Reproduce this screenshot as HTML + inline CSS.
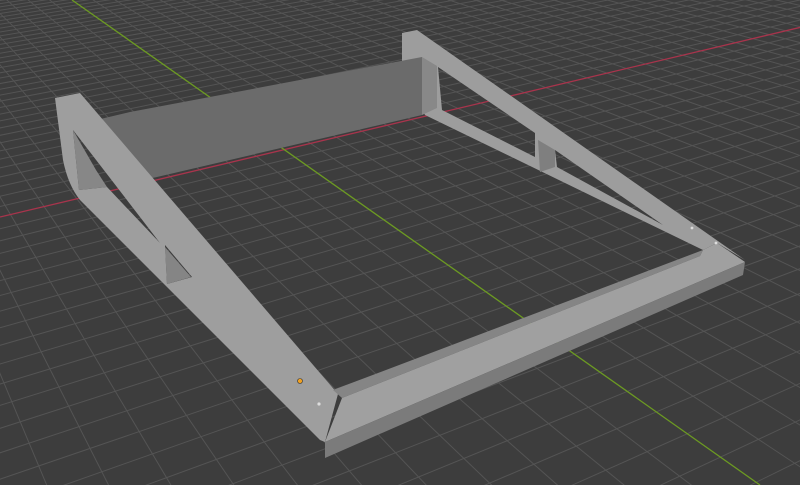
<!DOCTYPE html>
<html><head><meta charset="utf-8"><style>
html,body{margin:0;padding:0;background:#3d3d3d;width:800px;height:485px;overflow:hidden}
svg{display:block;overflow:hidden;position:absolute;left:0;top:0}
</style></head><body>
<svg id="s" width="800" height="485" viewBox="0 0 800 485" xmlns="http://www.w3.org/2000/svg">
<rect width="800" height="485" fill="#3d3d3d"/>
<g id="grid" stroke="#545454" stroke-width="1" fill="none"></g>
<g id="axes" fill="none" stroke-width="1.3"></g>
<g id="model">
<path fill="#9d9d9d" fill-rule="evenodd" d="M402,33 L417,30 L745,260 L717,243 L703,250 L425,115 L402,70 Z M438,67 L535,133 L535,157 L442,110 Z M555,150 L663,225 L557,167 Z"/>
<path fill="#7f7f7f" d="M538,140 L555,150 L555,167 L540,172 Z"/>
<path fill="#6b6b6b" d="M92,121 L130,112 L422,57 L422,115 L157,177 L120,185 Z"/>
<path fill="#888" d="M422,57 L437,66 L437,108 L422,115 Z"/>
<path fill="#9e9e9e" fill-rule="evenodd" d="M55,98 L80,93 L338,394 L325,442 L320,440 L115,235 L80,200 Q68,185 63,160 L55,98 Z M73,130 L160,243 L107,187 L79,190 Z M165,245 L192,277 L167,284 Z"/>
<path fill="#878787" d="M73,130 L79,190 L107,187 L96,170 Z"/>
<path fill="#858585" d="M165,247 L191,277 L167,284 Z"/>
<path fill="#858585" d="M333,390 L703,250 L700,256 L342,398 Z"/>
<path fill="#a0a0a0" d="M342,398 L700,256 L703,250 L717,243 L745,262 L325,442 Z"/>
<path fill="#7b7b7b" d="M325,442 L745,262 L743,275 L325,458 Z"/>
<circle cx="300" cy="381" r="2.5" fill="#f0a020" stroke="#333" stroke-width="0.6"/>
<circle cx="319" cy="404" r="1.6" fill="#ddd"/>
<circle cx="692" cy="228" r="1.4" fill="#ddd"/>
<circle cx="716" cy="243" r="1.4" fill="#ddd"/>
</g>
</svg>
<script>
(function(){
var V1=[-252,-228],V2=[2500,-376],O=[284,150],a=0.0122,b=0.0195;
function P(u,v){var d=a*u+b*v+1;return[(a*u*V2[0]+b*v*V1[0]+O[0])/d,(a*u*V2[1]+b*v*V1[1]+O[1])/d];}
var eps=0.05,N=300,s='';
for(var u=-N;u<=N;u++){
 var v1=(eps-1-a*u)/b; if(v1<-N)v1=-N; var v2=N; if(v1>=v2)continue;
 var p=P(u,v1),q=P(u,v2);
 if(u!==0)s+='<line x1="'+p[0].toFixed(1)+'" y1="'+p[1].toFixed(1)+'" x2="'+q[0].toFixed(1)+'" y2="'+q[1].toFixed(1)+'"/>';
}
for(var v=-N;v<=N;v++){
 var u1=(eps-1-b*v)/a; if(u1<-N)u1=-N; var u2=N; if(u1>=u2)continue;
 var p=P(u1,v),q=P(u2,v);
 if(v!==0)s+='<line x1="'+p[0].toFixed(1)+'" y1="'+p[1].toFixed(1)+'" x2="'+q[0].toFixed(1)+'" y2="'+q[1].toFixed(1)+'"/>';
}
document.getElementById('grid').innerHTML=s;
document.getElementById('axes').innerHTML=
 '<line x1="0" y1="217" x2="800" y2="27.4" stroke="#a8344c"/>'+
 '<line x1="72" y1="0" x2="760" y2="485" stroke="#6c9a22"/>';
})();
</script>
</body></html>
